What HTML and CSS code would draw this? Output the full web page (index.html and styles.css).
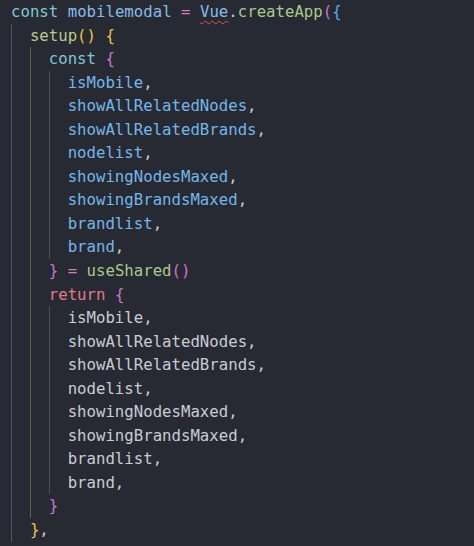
FILE: index.html
```html
<!DOCTYPE html>
<html>
<head>
<meta charset="utf-8">
<link rel="stylesheet" href="styles.css">
</head>
<body>
<div class="code">
  <div class="line"><span class="kw">const</span> <span class="var">mobilemodal</span> <span class="op">=</span> <span class="var squiggle">Vue</span><span class="pl">.</span><span class="fn">createApp</span><span class="bp">(</span><span class="bb">{</span></div>
  <div class="line"><span class="g g1"></span><span class="fn2">setup</span><span class="by">()</span> <span class="by">{</span></div>
  <div class="line"><span class="g g1"></span><span class="g g2"></span><span class="kw">const</span> <span class="bp">{</span></div>
  <div class="line"><span class="g g1"></span><span class="g g2"></span><span class="g g3"></span><span class="id">isMobile</span><span class="pl">,</span></div>
  <div class="line"><span class="g g1"></span><span class="g g2"></span><span class="g g3"></span><span class="id">showAllRelatedNodes</span><span class="pl">,</span></div>
  <div class="line"><span class="g g1"></span><span class="g g2"></span><span class="g g3"></span><span class="id">showAllRelatedBrands</span><span class="pl">,</span></div>
  <div class="line"><span class="g g1"></span><span class="g g2"></span><span class="g g3"></span><span class="id">nodelist</span><span class="pl">,</span></div>
  <div class="line"><span class="g g1"></span><span class="g g2"></span><span class="g g3"></span><span class="id">showingNodesMaxed</span><span class="pl">,</span></div>
  <div class="line"><span class="g g1"></span><span class="g g2"></span><span class="g g3"></span><span class="id">showingBrandsMaxed</span><span class="pl">,</span></div>
  <div class="line"><span class="g g1"></span><span class="g g2"></span><span class="g g3"></span><span class="id">brandlist</span><span class="pl">,</span></div>
  <div class="line"><span class="g g1"></span><span class="g g2"></span><span class="g g3"></span><span class="id">brand</span><span class="pl">,</span></div>
  <div class="line"><span class="g g1"></span><span class="g g2"></span><span class="bp">}</span> <span class="op">=</span> <span class="fn">useShared</span><span class="bp">()</span></div>
  <div class="line"><span class="g g1"></span><span class="g g2"></span><span class="ret">return</span> <span class="bp">{</span></div>
  <div class="line"><span class="g g1"></span><span class="g g2"></span><span class="g g3"></span><span class="pl">isMobile,</span></div>
  <div class="line"><span class="g g1"></span><span class="g g2"></span><span class="g g3"></span><span class="pl">showAllRelatedNodes,</span></div>
  <div class="line"><span class="g g1"></span><span class="g g2"></span><span class="g g3"></span><span class="pl">showAllRelatedBrands,</span></div>
  <div class="line"><span class="g g1"></span><span class="g g2"></span><span class="g g3"></span><span class="pl">nodelist,</span></div>
  <div class="line"><span class="g g1"></span><span class="g g2"></span><span class="g g3"></span><span class="pl">showingNodesMaxed,</span></div>
  <div class="line"><span class="g g1"></span><span class="g g2"></span><span class="g g3"></span><span class="pl">showingBrandsMaxed,</span></div>
  <div class="line"><span class="g g1"></span><span class="g g2"></span><span class="g g3"></span><span class="pl">brandlist,</span></div>
  <div class="line"><span class="g g1"></span><span class="g g2"></span><span class="g g3"></span><span class="pl">brand,</span></div>
  <div class="line"><span class="g g1"></span><span class="g g2"></span><span class="bp">}</span></div>
  <div class="line"><span class="g g1"></span><span class="by">}</span><span class="pl">,</span></div>
</div>
</body>
</html>
```
FILE: styles.css
```css
html, body {
  margin: 0;
  padding: 0;
  background: #282a33;
  height: 100%;
  overflow: hidden;
}
.code {
  padding: 0 0 0 11px;
  font-family: "DejaVu Sans Mono", monospace;
  font-size: 15.7px;
  line-height: 23.55px;
  color: #c9ccd3;
}
.line {
  display: block;
  white-space: pre;
  height: 23.55px;
}
.g {
  display: inline-block;
  vertical-align: top;
  width: 2ch;
  height: 23.55px;
  box-sizing: border-box;
  border-left: 1px solid #4e5470;
}
.g2 { border-left-color: #6a6240; }
.g3 { border-left-color: #574a66; }
.kw { color: #80c6d6; }
.var { color: #86bbe6; }
.op { color: #d07fc0; }
.pl { color: #c9ccd3; }
.fn { color: #a9c98c; }
.fn2 { color: #bcc98c; }
.bp { color: #c678d2; }
.bb { color: #5aa8ef; }
.by { color: #e8c54c; }
.id { color: #74b6ea; }
.ret { color: #e27a8c; }
.squiggle {
  text-decoration: underline wavy #e0524f;
  text-decoration-thickness: 1px;
  text-underline-offset: 3px;
}
```
